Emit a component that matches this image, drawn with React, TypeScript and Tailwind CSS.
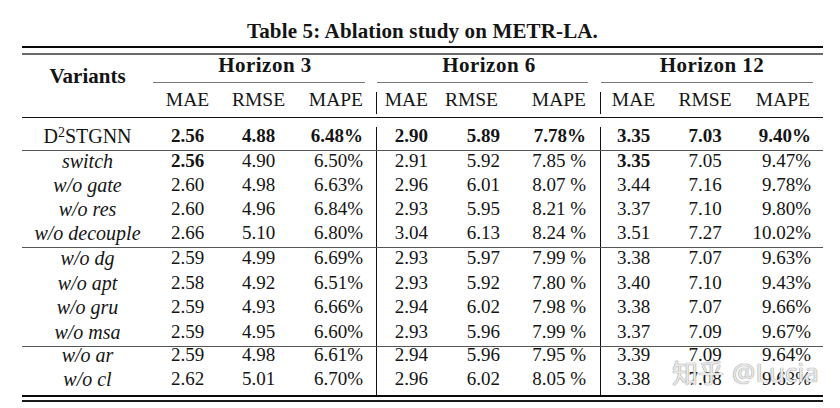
import React from "react";

type Cell = { v: string; b?: boolean };

const GRID =
  "grid grid-cols-[131px_69px_73px_81px_1px_63px_72px_88px_1px_65px_78px_79px]";

const ALIGN = [
  "text-center",
  "text-center",
  "text-right pr-[13px]",
  "text-right pr-[12px]",
  "text-right pr-[12px]",
  "text-right pr-[14px]",
  "text-center",
  "text-center",
  "text-right pr-[12px]",
];

const p = (s: string): Cell[] =>
  s.split("|").map((x) => {
    const t = x.trim();
    return t.startsWith("*") ? { v: t.slice(1), b: true } : { v: t };
  });

type RowDef = { name: React.ReactNode; cells: Cell[] };

const group2: RowDef[] = [
  { name: "switch", cells: p("*2.56|4.90|6.50%|2.91|5.92|7.85 %|*3.35|7.05|9.47%") },
  { name: "w/o gate", cells: p("2.60|4.98|6.63%|2.96|6.01|8.07 %|3.44|7.16|9.78%") },
  { name: "w/o res", cells: p("2.60|4.96|6.84%|2.93|5.95|8.21 %|3.37|7.10|9.80%") },
  { name: "w/o decouple", cells: p("2.66|5.10|6.80%|3.04|6.13|8.24 %|3.51|7.27|10.02%") },
];
const group3: RowDef[] = [
  { name: "w/o dg", cells: p("2.59|4.99|6.69%|2.93|5.97|7.99 %|3.38|7.07|9.63%") },
  { name: "w/o apt", cells: p("2.58|4.92|6.51%|2.93|5.92|7.80 %|3.40|7.10|9.43%") },
  { name: "w/o gru", cells: p("2.59|4.93|6.66%|2.94|6.02|7.98 %|3.38|7.07|9.66%") },
  { name: "w/o msa", cells: p("2.59|4.95|6.60%|2.93|5.96|7.99 %|3.37|7.09|9.67%") },
];
const group4: RowDef[] = [
  { name: "w/o ar", cells: p("2.59|4.98|6.61%|2.94|5.96|7.95 %|3.39|7.09|9.64%") },
  { name: "w/o cl", cells: p("2.62|5.01|6.70%|2.96|6.02|8.05 %|3.38|7.08|9.63%") },
];

function Row({
  name,
  cells,
  rowCls,
  textCls,
  italic = true,
  vlineCls = "",
}: {
  name: React.ReactNode;
  cells: Cell[];
  rowCls: string;
  textCls: string;
  italic?: boolean;
  vlineCls?: string;
}) {
  const dataCell = (i: number) => (
    <div
      key={i}
      className={`${ALIGN[i]} ${textCls} text-[19px] ${cells[i].b ? "font-bold" : ""} whitespace-nowrap`}
    >
      {cells[i].v}
    </div>
  );
  return (
    <div className={`${GRID} ${rowCls}`}>
      <div className={`text-center ${textCls} text-[20px] whitespace-nowrap ${italic ? "italic" : ""}`}>
        {name}
      </div>
      {dataCell(0)}
      {dataCell(1)}
      {dataCell(2)}
      <div className={`bg-[#111] ${vlineCls}`} />
      {dataCell(3)}
      {dataCell(4)}
      {dataCell(5)}
      <div className={`bg-[#111] ${vlineCls}`} />
      {dataCell(6)}
      {dataCell(7)}
      {dataCell(8)}
    </div>
  );
}

export default function App() {
  const sub = "pt-[7px] leading-[20px] text-[19.5px] whitespace-nowrap";
  const horizon = "text-center leading-[20px] text-[21px] font-bold tracking-[0.5px] whitespace-nowrap";
  return (
    <div className="relative w-[840px] h-[408px] bg-white text-[#141414] font-['Liberation_Serif',serif] overflow-hidden">
      <div className="ml-[22px] w-[801px] flex flex-col">
        {/* Caption */}
        <div className="pt-[19px] leading-[24px] text-[21px] font-bold text-center tracking-[0.15px] whitespace-nowrap">
          Table 5: Ablation study on METR-LA.
        </div>
        <div className="mt-[3px] h-[2px] bg-[#0a0a0a]" />
        <div className="h-[5px]" />
        <div className="h-[2px] bg-[#6a6a6a]" />

        {/* Header */}
        <div className={`${GRID} grid-rows-[28px_34px]`}>
          <div className="row-span-2 pt-[11px] leading-[20px] text-[21px] font-bold text-center">
            Variants
          </div>
          <div className="col-span-4 flex flex-col">
            <div className={horizon}>Horizon 3</div>
            <div className="mt-[7px] mr-[12px] h-px bg-[#7a7a7a]" />
          </div>
          <div className="col-span-4 flex flex-col">
            <div className={horizon}>Horizon 6</div>
            <div className="mt-[7px] mr-[13px] h-px bg-[#7a7a7a]" />
          </div>
          <div className="col-span-3 flex flex-col">
            <div className={horizon}>Horizon 12</div>
            <div className="mt-[7px] mr-[10px] h-px bg-[#7a7a7a]" />
          </div>

          <div className={`${ALIGN[0]} ${sub}`}>MAE</div>
          <div className={`${ALIGN[1]} ${sub}`}>RMSE</div>
          <div className={`${ALIGN[2]} ${sub}`}>MAPE</div>
          <div className="mt-[9px] mb-[3px] bg-[#111]" />
          <div className={`${ALIGN[3]} ${sub}`}>MAE</div>
          <div className={`text-right pr-[14px] ${sub}`}>RMSE</div>
          <div className={`${ALIGN[5]} ${sub}`}>MAPE</div>
          <div className="mt-[9px] mb-[3px] bg-[#111]" />
          <div className={`${ALIGN[6]} ${sub}`}>MAE</div>
          <div className={`${ALIGN[7]} ${sub}`}>RMSE</div>
          <div className={`text-right pr-[13px] ${sub}`}>MAPE</div>
        </div>
        <div className="h-px bg-[#111]" />

        {/* Body */}
        <Row
          name={
            <span>
              D<span className="relative -top-[6px] text-[14px]">2</span>STGNN
            </span>
          }
          italic={false}
          cells={p("*2.56|*4.88|*6.48%|*2.90|*5.89|*7.78%|*3.35|*7.03|*9.40%")}
          rowCls="h-[32px]"
          textCls="pt-[8px] leading-[20px]"
          vlineCls="mt-[9px]"
        />
        <div className="h-px bg-[#555]" />
        {group2.map((r, i) => (
          <Row key={i} name={r.name} cells={r.cells} rowCls="h-[24px]" textCls="leading-[20px]" />
        ))}
        <div className="h-px bg-[#555]" />
        {group3.map((r, i) => (
          <Row key={i} name={r.name} cells={r.cells} rowCls="h-[24.5px]" textCls="leading-[20px]" />
        ))}
        <div className="h-px bg-[#555]" />
        {group4.map((r, i) => (
          <Row key={i} name={r.name} cells={r.cells} rowCls="h-[24px]" textCls="leading-[16px]" />
        ))}
        <div className="h-[2px] bg-[#0a0a0a]" />
        <div className="h-[3px]" />
        <div className="h-[2px] bg-[#1a1a1a]" />
      </div>

      {/* Watermark */}
      <div className="absolute left-[672px] top-[356px] flex items-center gap-[8px] text-[26px] leading-[32px] text-white/80 [text-shadow:0_0_1px_#8a8a8a,0_0_1px_#8a8a8a] whitespace-nowrap">
        <span className="font-['Noto_Sans_CJK_SC',sans-serif]">知乎</span>
        <span className="font-['Noto_Sans',sans-serif]">@Lucia</span>
      </div>
    </div>
  );
}
